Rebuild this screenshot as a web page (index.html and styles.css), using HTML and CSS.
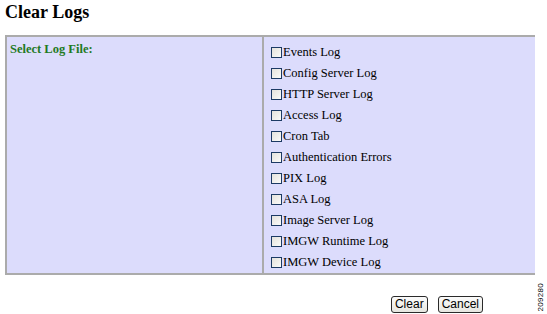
FILE: index.html
```html
<!DOCTYPE html>
<html lang="en">
<head>
  <meta charset="UTF-8">
  <title>Clear Logs</title>
  <link rel="stylesheet" href="styles.css">
</head>
<body>
  <div class="page">
    <h1 class="title">Clear Logs</h1>

    <table class="log-table">
      <tr>
        <td class="label-cell">Select Log File:</td>
        <td class="list-cell">
          <label class="log-item"><input type="checkbox">Events Log</label>
          <label class="log-item"><input type="checkbox">Config Server Log</label>
          <label class="log-item"><input type="checkbox">HTTP Server Log</label>
          <label class="log-item"><input type="checkbox">Access Log</label>
          <label class="log-item"><input type="checkbox">Cron Tab</label>
          <label class="log-item"><input type="checkbox">Authentication Errors</label>
          <label class="log-item"><input type="checkbox">PIX Log</label>
          <label class="log-item"><input type="checkbox">ASA Log</label>
          <label class="log-item"><input type="checkbox">Image Server Log</label>
          <label class="log-item"><input type="checkbox">IMGW Runtime Log</label>
          <label class="log-item"><input type="checkbox">IMGW Device Log</label>
        </td>
      </tr>
    </table>

    <div class="footer">
      <div class="buttons">
        <button class="btn">Clear</button>
        <button class="btn">Cancel</button>
      </div>
      <span class="fig-id">209280</span>
    </div>
  </div>
</body>
</html>
```

FILE: styles.css
```css
body {
  margin: 0;
  padding: 0;
  background: #fff;
  font-family: "Liberation Serif", "Times New Roman", serif;
  color: #000;
}

.page {
  width: 547px;
  height: 314px;
  display: flex;
  flex-direction: column;
}

.title {
  margin: 0;
  padding: 2px 0 0 5px;
  height: 35px;
  box-sizing: border-box;
  font-size: 18px;
  font-weight: bold;
  line-height: 20px;
}

.log-table {
  margin-left: 5px;
  width: 530px;
  height: 240px;
  border-collapse: collapse;
  background: #dcdcfc;
}

.log-table td {
  vertical-align: top;
  border-top: 2px solid #ababab;
  border-bottom: 2px solid #ababab;
}

.label-cell {
  width: 249px;
  padding: 5px 3px;
  border-left: 2px solid #ababab;
  border-right: 2px solid #ababab;
  color: #1f7a24;
  font-weight: bold;
  font-size: 12.5px;
}

.list-cell {
  padding: 5px 0 0 7px;
  border-right: none;
}

.log-item {
  display: flex;
  align-items: center;
  height: 21px;
  font-family: "Liberation Serif", "Times New Roman", serif;
  font-size: 12.5px;
  white-space: nowrap;
}

.log-item input {
  appearance: none;
  width: 11px;
  height: 11px;
  margin: 0 1px 0 0;
  border: 1px solid #1c3a64;
  background: linear-gradient(135deg, #e4e2dc, #fbfbf9);
  box-sizing: border-box;
}

.footer {
  flex: 1;
  display: flex;
  justify-content: flex-end;
  align-items: flex-end;
}

.buttons {
  display: flex;
  gap: 10px;
  margin-right: 53px;
  margin-bottom: 1px;
}

.btn {
  font-family: "Liberation Sans", Arial, sans-serif;
  font-size: 12px;
  height: 17px;
  padding: 0 3px;
  border: 1px solid #2a2a2a;
  border-radius: 3px;
  background: linear-gradient(#fbfbfb, #e6e6e0);
  color: #000;
  line-height: 15px;
}

.fig-id {
  writing-mode: vertical-rl;
  transform: rotate(180deg);
  font-family: "Liberation Sans", Arial, sans-serif;
  font-size: 8px;
  margin-right: 2px;
  margin-bottom: 3px;
  letter-spacing: 0.3px;
}
```
